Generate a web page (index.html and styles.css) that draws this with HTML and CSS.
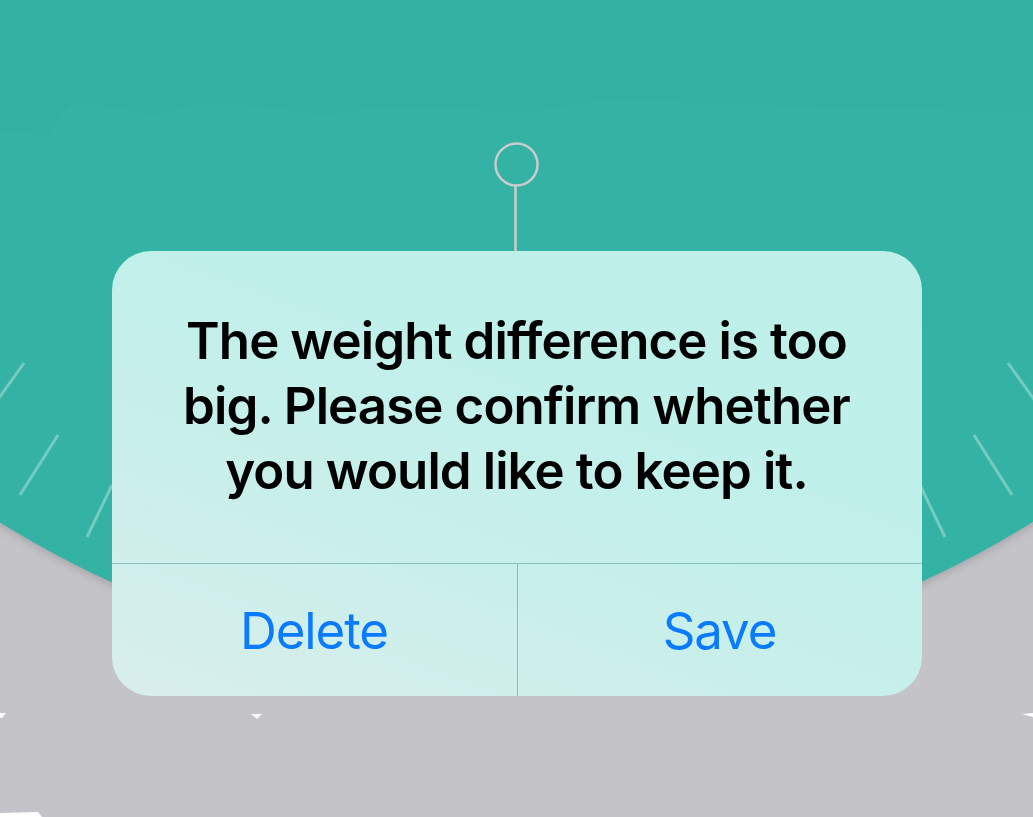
FILE: index.html
```html
<!DOCTYPE html>
<html lang="en">
<head>
<meta charset="utf-8">
<title>Weight alert</title>
<link rel="stylesheet" href="styles.css">
</head>
<body>
<div class="screen">
  <div class="dial"></div>
  <svg class="dial-art" width="1033" height="817" viewBox="0 0 1033 817" aria-hidden="true">
    <path class="haze" d="M0 0 H1033 V112 C900 112 700 100 600 102 C560 104 540 115 520 113 C480 110 420 106 380 108 C350 110 330 118 300 112 C260 106 240 104 200 104 C180 104 170 115 150 114 C120 112 100 102 80 104 C60 106 55 135 45 136 C30 137 20 128 0 133 Z"/>
    <g class="ticks">
      <line x1="24" y1="363" x2="-41" y2="454"/>
      <line x1="58" y1="435" x2="20" y2="495"/>
      <line x1="112" y1="485" x2="87" y2="537"/>
      <line x1="1008" y1="363" x2="1073" y2="454"/>
      <line x1="974" y1="435" x2="1012" y2="495"/>
      <line x1="920" y1="485" x2="945" y2="537"/>
    </g>
    <g class="pointer">
      <circle cx="516.5" cy="164.5" r="21"/>
      <line x1="515.5" y1="186" x2="515.5" y2="252"/>
    </g>
    <g class="marks">
      <path d="M0 713 L6 713 L2 718 L0 718 Z"/>
      <path d="M251 714 L262 714 L257 719 Z"/>
      <path d="M1022 714 L1033 713 L1033 717 Z"/>
      <path d="M0 813 L38 812 L42 817 L0 817 Z"/>
    </g>
  </svg>

  <div class="overlay">
    <div class="alert" role="alertdialog">
      <p class="alert-title">The weight difference is too big. Please confirm whether you would like to keep it.</p>
      <div class="alert-actions">
        <button class="alert-btn">Delete</button>
        <button class="alert-btn">Save</button>
      </div>
    </div>
  </div>
</div>
</body>
</html>
```

FILE: styles.css
```css
html, body {
  margin: 0;
  padding: 0;
  background: #c4c3c8;
}

.screen {
  position: relative;
  width: 1033px;
  height: 817px;
  overflow: hidden;
  background: #c4c3c8;
  font-family: Inter, "Noto Sans", "Liberation Sans", sans-serif;
}

.dial {
  position: absolute;
  left: -460px;
  top: -1282px;
  width: 1952px;
  height: 1952px;
  border-radius: 50%;
  background: #34b3a5;
  box-shadow: 0 3px 8px rgba(60, 60, 70, 0.22);
}

.dial-art {
  position: absolute;
  left: 0;
  top: 0;
}

.haze {
  fill: rgba(20, 60, 60, 0.018);
}

.ticks line {
  stroke: rgba(255, 255, 255, 0.32);
  stroke-width: 3;
}

.pointer circle {
  fill: none;
  stroke: #cbcbcb;
  stroke-width: 2.5;
}

.pointer line {
  stroke: #cbcbcb;
  stroke-width: 2.5;
}

.marks path {
  fill: #ffffff;
}

.overlay {
  position: absolute;
  inset: 0;
  display: flex;
  justify-content: center;
  align-items: flex-start;
  padding-top: 251px;
}

.alert {
  width: 810px;
  border-radius: 39px;
  overflow: hidden;
  background: linear-gradient(20deg, #d9eeed 0%, #c9efea 35%, #c0f0ea 65%, #bfefe9 100%);
}

.alert-title {
  margin: 0;
  padding: 57px 40px 60px;
  text-align: center;
  color: #000000;
  font-size: 51px;
  font-weight: 600;
  line-height: 65px;
  letter-spacing: -0.9px;
}

.alert-actions {
  display: grid;
  grid-template-columns: 1fr 1fr;
  border-top: 1px solid #84c2b9;
}

.alert-btn {
  height: 132px;
  margin: 0;
  padding: 0;
  border: 0;
  background: transparent;
  color: #0a7aff;
  font-family: inherit;
  font-size: 51px;
  font-weight: 400;
  letter-spacing: -1.1px;
}

.alert-btn + .alert-btn {
  border-left: 1px solid #84c2b9;
}
```
